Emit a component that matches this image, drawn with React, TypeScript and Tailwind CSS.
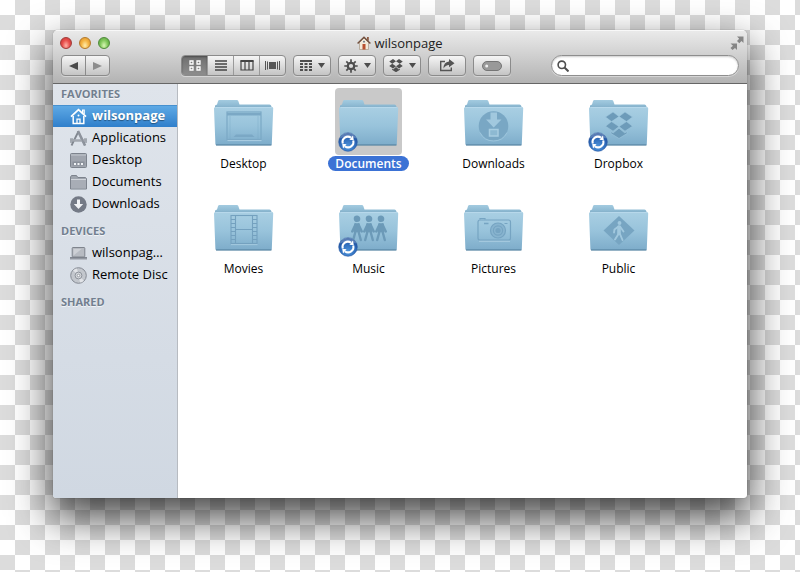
import React, { useState } from 'react';

type Emblem = 'desktop' | 'downloads' | 'dropbox' | 'movies' | 'people' | 'camera' | 'public' | null;

interface FolderItem {
  name: string;
  emblem: Emblem;
  synced?: boolean;
}

const folders: FolderItem[] = [
  { name: 'Desktop', emblem: 'desktop' },
  { name: 'Documents', emblem: null, synced: true },
  { name: 'Downloads', emblem: 'downloads' },
  { name: 'Dropbox', emblem: 'dropbox', synced: true },
  { name: 'Movies', emblem: 'movies' },
  { name: 'Music', emblem: 'people', synced: true },
  { name: 'Pictures', emblem: 'camera' },
  { name: 'Public', emblem: 'public' },
];

const HomeIcon = () => (
  <svg width="17" height="17" viewBox="0 0 17 17" fill="none" stroke="#fff">
    <path d="M1 8.6 8.5 1.6 16 8.6" strokeWidth="1.7" />
    <path d="M12.6 5V2h1.6v4" strokeWidth="1.2" />
    <path d="M3.2 8v7.6h10.6V8" strokeWidth="1.5" />
    <path d="M7 15.5v-4.3h3v4.3" strokeWidth="1.3" />
    <circle cx="8.5" cy="7.4" r="1" fill="#fff" stroke="none" />
  </svg>
);

const AppsIcon = () => (
  <svg width="17" height="17" viewBox="0 0 17 17" fill="none" stroke="#80868f">
    <path d="M1.5 15.5 8.4 1.5" strokeWidth="1.8" />
    <path d="M8 1 15 15.5" strokeWidth="2.6" stroke="#8d939c" />
    <path d="M0 10.5h17" strokeWidth="2.4" stroke="#a2a7af" />
    <path d="M0 12.2h4M13 12.2h4M0 8.9h3M14 8.9h3" strokeWidth=".8" />
    <path d="M8 1 15 15.5" strokeWidth="1.6" stroke="#8d939c" />
  </svg>
);

const DesktopIcon = () => (
  <svg width="17" height="17" viewBox="0 0 17 17">
    <rect x=".5" y="1.5" width="16" height="14" rx="1" fill="#a0a5ae" stroke="#7d838d" />
    <path d="M1 3h15" stroke="#c3c8cf" />
    <rect x="2.5" y="9.5" width="12" height="4" fill="#8a909a" />
    <path d="M4 11h2v2H4zM7.5 11h2v2h-2zM11 11h2v2h-2z" fill="#f1f3f6" />
  </svg>
);

const DocumentsIcon = () => (
  <svg width="17" height="17" viewBox="0 0 17 17">
    <path d="M.5 15V3l1-1.500h5L7.800 3.500h7.700l1 1V15z" fill="#9ea4ad" stroke="#7d838d" />
    <path d="M1 5.500h15" stroke="#d0d4da" />
    <path d="M1 6h15v8.500H1z" fill="#a8adb6" />
  </svg>
);

const DownloadsIcon = () => (
  <svg width="17" height="17" viewBox="0 0 17 17">
    <circle cx="8.5" cy="8.5" r="8.2" fill="#747a86" />
    <path d="M7 3.500h3V8h3.200L8.500 13 3.800 8H7z" fill="#f0f2f5" />
  </svg>
);

const LaptopIcon = () => (
  <svg width="17" height="17" viewBox="0 0 17 17">
    <rect x="2.200" y="2.500" width="12.600" height="9.500" rx=".8" fill="#b7bbc2" stroke="#7f848d" />
    <path d="M3.500 10.500V4h8z" fill="#cdd0d5" />
    <path d="M0 12.500h17v2H0z" fill="#9297a0" />
    <path d="M0 12.500h17" stroke="#737983" strokeWidth=".8" />
  </svg>
);

const DiscIcon = () => (
  <svg width="17" height="17" viewBox="0 0 17 17" fill="none">
    <circle cx="8.500" cy="8.500" r="7.800" fill="#c3c7cd" stroke="#858a93" />
    <path d="M8.500 8.500 3 3.300A7.300 7.300 0 0 1 7 1.400zM8.500 8.500l5.500 5.200a7.300 7.300 0 0 1-4 1.900z" fill="#e2e4e8" />
    <circle cx="8.500" cy="8.500" r="3.400" fill="#d5d8dc" stroke="#8e939b" />
    <circle cx="8.500" cy="8.500" r="1.300" fill="#fff" stroke="#858a93" strokeWidth=".8" />
  </svg>
);

const sections = [
  {
    title: 'FAVORITES',
    items: [
      { name: 'wilsonpage', icon: HomeIcon },
      { name: 'Applications', icon: AppsIcon },
      { name: 'Desktop', icon: DesktopIcon },
      { name: 'Documents', icon: DocumentsIcon },
      { name: 'Downloads', icon: DownloadsIcon },
    ],
  },
  {
    title: 'DEVICES',
    items: [
      { name: 'wilsonpag…', icon: LaptopIcon },
      { name: 'Remote Disc', icon: DiscIcon },
    ],
  },
  { title: 'SHARED', items: [] },
];

// Tone-on-tone artwork pressed into the folder front
const FolderEmblem: React.FC<{ emblem: Emblem }> = ({ emblem }) => {
  switch (emblem) {
    case 'desktop':
      return (
        <g fill="none" stroke="#7ba8c5" strokeWidth="1.200">
          <rect x="17" y="24" width="34" height="27.500" />
          <path d="M17 26.200h34" strokeWidth="2.400" />
          <path d="M20 28v23M48 28v23" strokeWidth=".7" opacity=".6" />
          <path d="M26 46.500h16l2.500 2.500h-21z" fill="#7ba8c5" stroke="none" />
          <path d="M17.500 52.600h34" stroke="#b7d6e8" strokeWidth=".8" />
        </g>
      );
    case 'downloads':
      return (
        <g>
          <circle cx="33.500" cy="38" r="14.800" fill="#79a7c4" />
          <path d="M30.500 24.500h6.500v7h4.500L33.700 39.500l-7.700-8h4.500z" fill="#a1c8de" />
          <path d="M29.500 41.500h8.500v6.500h-8.500z" fill="#8db9d2" stroke="#a8cde1" strokeWidth="1.500" />
          <path d="M20 44.500a15 15 0 0 0 27 0" fill="none" stroke="#a5cce1" strokeWidth=".8" />
        </g>
      );
    case 'dropbox':
      return (
        <g fill="#6d9bb9" stroke="#a0c8dd" strokeWidth=".6">
          <path d="m28 24 6 4.600-7.500 5L20.500 29zM40 24l7.500 5-6 4.600-7.500-5zM20.500 38.200l6-4.600 7.500 5-6 4.600zM41.500 33.600l6 4.600-7.500 5-6-4.600zM26 43.500l2.200 1.400 5.800-4.700 5.800 4.700 2.200-1.400v2L34 50.500l-8-5z" />
        </g>
      );
    case 'movies':
      return (
        <g fill="none" stroke="#74a1bf" strokeWidth="1.100">
          <rect x="21" y="22.500" width="26" height="28" />
          <path d="M25.500 22.500v28M42.500 22.500v28M25.500 36.500h17" />
          <path d="M21 26.500h4.500M21 30.500h4.500M21 34.500h4.500M21 38.500h4.500M21 42.500h4.500M21 46.500h4.500M42.500 26.500H47M42.500 30.500H47M42.500 34.500H47M42.500 38.500H47M42.500 42.500H47M42.500 46.500H47" />
          <path d="M21 51.600h26.500" stroke="#b2d3e6" strokeWidth=".7" />
        </g>
      );
    case 'people':
      return (
        <g stroke="#6c9ab8" fill="#6c9ab8" strokeWidth="2.400" strokeLinecap="round">
          {[22, 34, 46].map((x) => (
            <g key={x} transform={`translate(${x} 23)`}>
              <circle cy="2.800" r="2.100" />
              <path d="M-1.500 8.500h3l.8 6.500h-4.600z" />
              <path d="M-1.500 8.500-4.800 15.500M1.500 8.500l3.300 7M-1.500 15.500-3.800 24M1.500 15.500 3.800 24" fill="none" />
            </g>
          ))}
        </g>
      );
    case 'camera':
      return (
        <g fill="none" stroke="#76a4c2" strokeWidth="1.200">
          <rect x="18" y="27" width="32.500" height="20" rx="2" />
          <path d="M20 26.600v-1.100h5v1.100" />
          <path d="M24 30.500h4.500" strokeWidth="1.500" />
          <circle cx="38" cy="37.500" r="7.500" fill="#88b4cf" />
          <circle cx="38" cy="37.500" r="4.600" />
          <circle cx="38" cy="37.500" r="2" fill="#76a4c2" />
          <path d="M44.500 30.500h3" />
          <path d="M19 48.300h31" stroke="#b7d6e8" strokeWidth=".7" />
        </g>
      );
    case 'public':
      return (
        <g>
          <path d="m34 23 15.500 14.500L34 52 18.500 37.500z" fill="#77a5c2" />
          <g fill="none" stroke="#a1c8de" strokeWidth="1.900" strokeLinecap="round">
            <circle cx="34.500" cy="30" r="1" fill="#a1c8de" />
            <path d="M34 34v6.500" strokeWidth="3.600" />
            <path d="m33.500 33.500-4 3-.5 3M35 33.500l3.500 5M33.500 41l-3.500 5.500M35 41l2.500 6" />
          </g>
        </g>
      );
    default:
      return null;
  }
};

const FolderIcon: React.FC<{ emblem: Emblem; synced?: boolean }> = ({ emblem, synced }) => (
  <svg width="67" height="67" viewBox="0 0 67 67">
    <defs>
      <linearGradient id="folderFront" x1="0" y1="0" x2="0" y2="1">
        <stop offset="0" stopColor="#a9cfe3" />
        <stop offset=".5" stopColor="#98c3db" />
        <stop offset="1" stopColor="#7dacca" />
      </linearGradient>
      <linearGradient id="folderBack" x1="0" y1="0" x2="0" y2="1">
        <stop offset="0" stopColor="#a3cbe0" />
        <stop offset=".6" stopColor="#8ebad3" />
        <stop offset="1" stopColor="#6f9dba" />
      </linearGradient>
      <radialGradient id="syncBadge" cx=".5" cy=".75" r=".75">
        <stop offset="0" stopColor="#4f95dc" />
        <stop offset=".6" stopColor="#2b68b8" />
        <stop offset="1" stopColor="#1c4690" />
      </radialGradient>
    </defs>
    <path d="M5 21v-3.500l2-1 1-3.300q.3-1.200 1.500-1.200h17.300q1.200 0 1.500 1l1.200 3.500H59.500q1.500 0 1.800 1.500L62 21z" fill="url(#folderBack)" />
    <path d="M4 20.500q0-1.500 1.500-1.500h56.300q1.500 0 1.400 1.500L61.800 56q-.1 1.200-1.300 1.200H6.700q-1.200 0-1.300-1.200z" fill="url(#folderFront)" />
    <path d="M5.500 19.400h56.300" stroke="#bcdced" strokeWidth=".8" />
    <path d="M6 57h55.500" stroke="#4f7d9a" strokeWidth="1.200" />
    <FolderEmblem emblem={emblem} />
    {synced && (
      <g>
        <circle cx="13" cy="54" r="9.300" fill="url(#syncBadge)" stroke="#2a5aa5" strokeWidth=".6" />
        <path d="M4.800 50.500a8.600 8.600 0 0 1 16.400 0q-8.200-4-16.400 0z" fill="#fff" opacity=".25" />
        <g fill="none" stroke="#fff" strokeWidth="2.100">
          <path d="M7.800 55.500a5.300 5.300 0 0 1 8.200-5.800" />
          <path d="M18.200 52.500a5.300 5.300 0 0 1-8.200 5.800" />
        </g>
        <path d="m14.400 51.800 4.400.5-.8-4.700zM11.600 56.200l-4.400-.5.8 4.700z" fill="#fff" />
      </g>
    )}
  </svg>
);

const Caret = () => (
  <svg width="7" height="5" viewBox="0 0 7 5" fill="#4d4d4d">
    <path d="M0 0h7L3.500 5z" />
  </svg>
);

const toolButton =
  'flex h-[21px] w-[38px] shrink-0 items-center justify-center gap-1.5 rounded border border-[#8b8b8b] bg-linear-to-b from-[#f6f6f6] to-[#c4c4c4] shadow-[0_1px_0_#ffffff66]';

const viewModes = [
  {
    name: 'Icons',
    icon: (
      <svg width="12" height="11" viewBox="0 0 12 11" fill="none" stroke="#fff" strokeWidth="1.300">
        <path d="M1 1h3v3H1zM8 1h3v3H8zM1 7h3v3H1zM8 7h3v3H8z" />
      </svg>
    ),
  },
  {
    name: 'List',
    icon: (
      <svg width="12" height="11" viewBox="0 0 12 11" stroke="#444" strokeWidth="1.300">
        <path d="M0 1h12M0 4h12M0 7h12M0 10h12" />
      </svg>
    ),
  },
  {
    name: 'Columns',
    icon: (
      <svg width="14" height="11" viewBox="0 0 14 11" fill="none" stroke="#444" strokeWidth="1.200">
        <path d="M1 1h12v9H1zM5 1v9M9 1v9" />
        <path d="M.5 1h13" strokeWidth="1.800" />
      </svg>
    ),
  },
  {
    name: 'Cover Flow',
    icon: (
      <svg width="15" height="11" viewBox="0 0 15 11" fill="#555">
        <path d="M4 2h7v7H4z" />
        <path d="M0 1h1v9H0zM2 1.500h1v8H2zM12 1.500h1v8h-1zM14 1h1v9h-1z" />
      </svg>
    ),
  },
];

const Toolbar: React.FC = () => {
  const [view, setView] = useState('Icons');

  return (
    <div className="flex items-center px-2">
      <div className="flex h-[21px] w-[49px] shrink-0 divide-x divide-[#8b8b8b] rounded border border-[#8b8b8b] bg-linear-to-b from-[#f6f6f6] to-[#c4c4c4] shadow-[0_1px_0_#ffffff66]">
        <button aria-label="Back" className="flex flex-1 items-center justify-center">
          <svg width="9" height="8" viewBox="0 0 9 8" fill="#4a4a4a"><path d="M9 0v8L0 4z" /></svg>
        </button>
        <button aria-label="Forward" className="flex flex-1 items-center justify-center">
          <svg width="9" height="8" viewBox="0 0 9 8" fill="#8d8d8d"><path d="M0 0v8l9-4z" /></svg>
        </button>
      </div>

      <div className="ml-[71px] flex h-[21px] w-[105px] shrink-0 divide-x divide-[#9a9a9a] overflow-hidden rounded border border-[#8b8b8b] bg-linear-to-b from-[#f6f6f6] to-[#c4c4c4] shadow-[0_1px_0_#ffffff66]">
        {viewModes.map((mode) => (
          <button
            key={mode.name}
            aria-label={mode.name}
            aria-pressed={view === mode.name}
            onClick={() => setView(mode.name)}
            className={`flex flex-1 items-center justify-center ${view === mode.name ? 'bg-linear-to-b from-[#6e6e6e] to-[#8e8e8e] shadow-[inset_0_1px_2px_#00000055]' : ''}`}
          >
            {mode.icon}
          </button>
        ))}
      </div>

      <div className="ml-[7px] flex gap-[7px]">
        <button aria-label="Arrange" className={toolButton}>
          <svg width="12" height="11" viewBox="0 0 12 11" fill="#4d4d4d">
            <path d="M0 0h12v2H0zM0 3h3v2H0zM4.500 3h3v2h-3zM9 3h3v2H9zM0 6h3v2H0zM4.500 6h3v2h-3zM9 6h3v2H9zM0 9h3v2H0zM4.500 9h3v2h-3zM9 9h3v2H9z" />
          </svg>
          <Caret />
        </button>
        <button aria-label="Action" className={toolButton}>
          <svg width="14" height="14" viewBox="0 0 14 14" fill="none" stroke="#4d4d4d">
            <circle cx="7" cy="7" r="3.200" strokeWidth="2.200" />
            <path d="M7 .3v3M7 10.700v3M.3 7h3M10.700 7h3M2.300 2.300l2 2M9.700 9.700l2 2M2.300 11.700l2-2M9.700 4.300l2-2" strokeWidth="1.700" />
          </svg>
          <Caret />
        </button>
        <button aria-label="Dropbox" className={toolButton}>
          <svg width="14" height="13" viewBox="0 0 27 26" fill="#505050">
            <path d="m7.500 0 6 4.600-7.500 5L0 5zM19.500 0 27 5l-6 4.600-7.500-5zM0 14.200l6-4.600 7.500 5-6 4.600zM21 9.600l6 4.600-7.500 5-6-4.600zM5.500 19.500l2.200 1.400 5.800-4.700 5.800 4.700 2.200-1.400v2L13.500 26.500l-8-5z" />
          </svg>
          <Caret />
        </button>
        <button aria-label="Share" className={toolButton}>
          <svg width="16" height="13" viewBox="0 0 16 13" fill="none" stroke="#555">
            <path d="M6 2.500H1.700v9h10.600V8.500" strokeWidth="1.400" />
            <path d="M10 0l5.500 4.300L10 8.300V6Q6.500 6 4.500 9.500 4.500 3 10 2.500z" fill="#555" stroke="none" />
          </svg>
        </button>
        <button aria-label="Edit Tags" className={toolButton}>
          <svg width="20" height="10" viewBox="0 0 20 10">
            <rect x=".5" y=".5" width="19" height="9" rx="4.500" fill="#999" stroke="#757575" />
            <circle cx="4.700" cy="5" r="1.500" fill="#eee" />
          </svg>
        </button>
      </div>

      <label className="ml-10 flex h-[21px] min-w-0 flex-1 items-center gap-1 rounded-full border border-[#8e8e8e] bg-white pl-[5px] shadow-[inset_0_1px_2px_#00000033,0_1px_0_#ffffff66]">
        <svg width="12" height="12" viewBox="0 0 12 12" fill="none" stroke="#4f4f4f" className="shrink-0">
          <circle cx="4.800" cy="4.800" r="3.700" strokeWidth="1.600" />
          <path d="m7.500 7.500 4 4" strokeWidth="2" />
        </svg>
        <input type="search" aria-label="Search" className="min-w-0 flex-1 bg-transparent text-xs outline-none" />
      </label>
    </div>
  );
};

const TitleBar: React.FC = () => (
  <div className="grid h-[25px] grid-cols-[1fr_auto_1fr] items-center px-[7px]">
    <div className="flex gap-[7px]">
      <button aria-label="Close" className="size-3 rounded-full border border-[#a03b38] bg-radial-[at_50%_75%] from-[#ffb3a8] via-[#e9504d] to-[#c2302f]" />
      <button aria-label="Minimize" className="size-3 rounded-full border border-[#b37a2c] bg-radial-[at_50%_75%] from-[#ffedac] via-[#f5b544] to-[#d58a25]" />
      <button aria-label="Zoom" className="size-3 rounded-full border border-[#4f8a3a] bg-radial-[at_50%_75%] from-[#d9f7b5] via-[#83c95d] to-[#4f9a37]" />
    </div>
    <h1 className="flex items-center gap-[3px] text-[13px] leading-4 text-[#222]">
      <svg width="14" height="14" viewBox="0 0 14 14">
        <path d="M2.500 6.500 7 2l4.500 4.500v7h-9z" fill="#f2ead9" stroke="#a99a86" strokeWidth=".7" />
        <path d="M10 1h1.800v4L10 3.500z" fill="#8d5a41" />
        <path d="M.6 7.500 7 1.200l6.400 6.300" fill="none" stroke="#73513f" strokeWidth="1.500" />
        <path d="M5.500 8h3v5.500h-3z" fill="#b8512f" />
        <circle cx="7" cy="5.700" r=".9" fill="#5f6c7a" />
      </svg>
      wilsonpage
    </h1>
    <button aria-label="Full Screen" className="-mr-1 justify-self-end">
      <svg width="14" height="14" viewBox="0 0 14 14" fill="#858585">
        <path d="M7 .5h6.500V7l-2-2-2.200 2.200L7 5l2.200-2.200zM.5 7.500H7V14l-2-2-2.500 2-2-2L3 9.700z" />
      </svg>
    </button>
  </div>
);

const Sidebar: React.FC = () => {
  const [active, setActive] = useState('FAVORITES/wilsonpage');

  return (
    <nav className="flex w-[125px] shrink-0 flex-col gap-1.5 border-r border-[#b7bbc1] bg-linear-to-b from-[#dfe4eb] to-[#d0d8e2]">
      {sections.map((section) => (
        <section key={section.title}>
          <h2 className="flex h-[21px] items-center pl-2 text-[11px] font-bold text-[#727f8f] [text-shadow:0_1px_0_#ffffffaa]">
            {section.title}
          </h2>
          {section.items.map(({ name, icon: Icon }) => {
            const key = `${section.title}/${name}`;
            const isActive = key === active;
            return (
              <button
                key={key}
                onClick={() => setActive(key)}
                className={`flex h-[22px] w-full items-center gap-[5px] pl-[17px] text-[13px] whitespace-nowrap ${
                  isActive
                    ? 'bg-linear-to-b from-[#60abe6] to-[#2f7fcb] font-bold text-white shadow-[inset_0_1px_0_#4690cf] [text-shadow:0_1px_1px_#00000066]'
                    : 'font-medium text-black'
                }`}
              >
                <span className="shrink-0"><Icon /></span>
                {name}
              </button>
            );
          })}
        </section>
      ))}
    </nav>
  );
};

export default function App() {
  const [selected, setSelected] = useState('Documents');

  return (
    <div className="flex min-h-screen flex-col bg-[repeating-conic-gradient(#dcdcdc_0_25%,#fff_0_50%)] bg-size-[30px_30px] px-[53px] pt-[30px] pb-[74px] font-['Open_Sans','Noto_Sans',sans-serif]">
      <div className="flex flex-1 flex-col overflow-hidden rounded-t-[5px] rounded-b-[3px] bg-white shadow-[0_18px_40px_2px_#000000b8,0_0_1px_#00000080]">
        <header className="border-b border-[#666] bg-linear-to-b from-[#ebebeb] to-[#b3b3b3] pb-[7px] shadow-[inset_0_1px_0_#f8f8f8]">
          <TitleBar />
          <Toolbar />
        </header>

        <div className="flex flex-1">
          <Sidebar />
          <main className="grid flex-1 grid-cols-[repeat(auto-fill,125px)] content-start gap-y-[22px] pt-1 pl-[3px]">
            {folders.map((folder) => {
              const isSelected = folder.name === selected;
              return (
                <button
                  key={folder.name}
                  onClick={() => setSelected(folder.name)}
                  className="flex flex-col items-center gap-px"
                >
                  <span className={`rounded-sm ${isSelected ? 'bg-[#c9c9c9]' : ''}`}>
                    <FolderIcon emblem={folder.emblem} synced={folder.synced} />
                  </span>
                  <span
                    className={`rounded-full px-[7px] text-xs leading-[15px] ${
                      isSelected ? 'bg-[#3b72d5] font-semibold text-white' : 'font-medium text-black'
                    }`}
                  >
                    {folder.name}
                  </span>
                </button>
              );
            })}
          </main>
        </div>
      </div>
    </div>
  );
}
